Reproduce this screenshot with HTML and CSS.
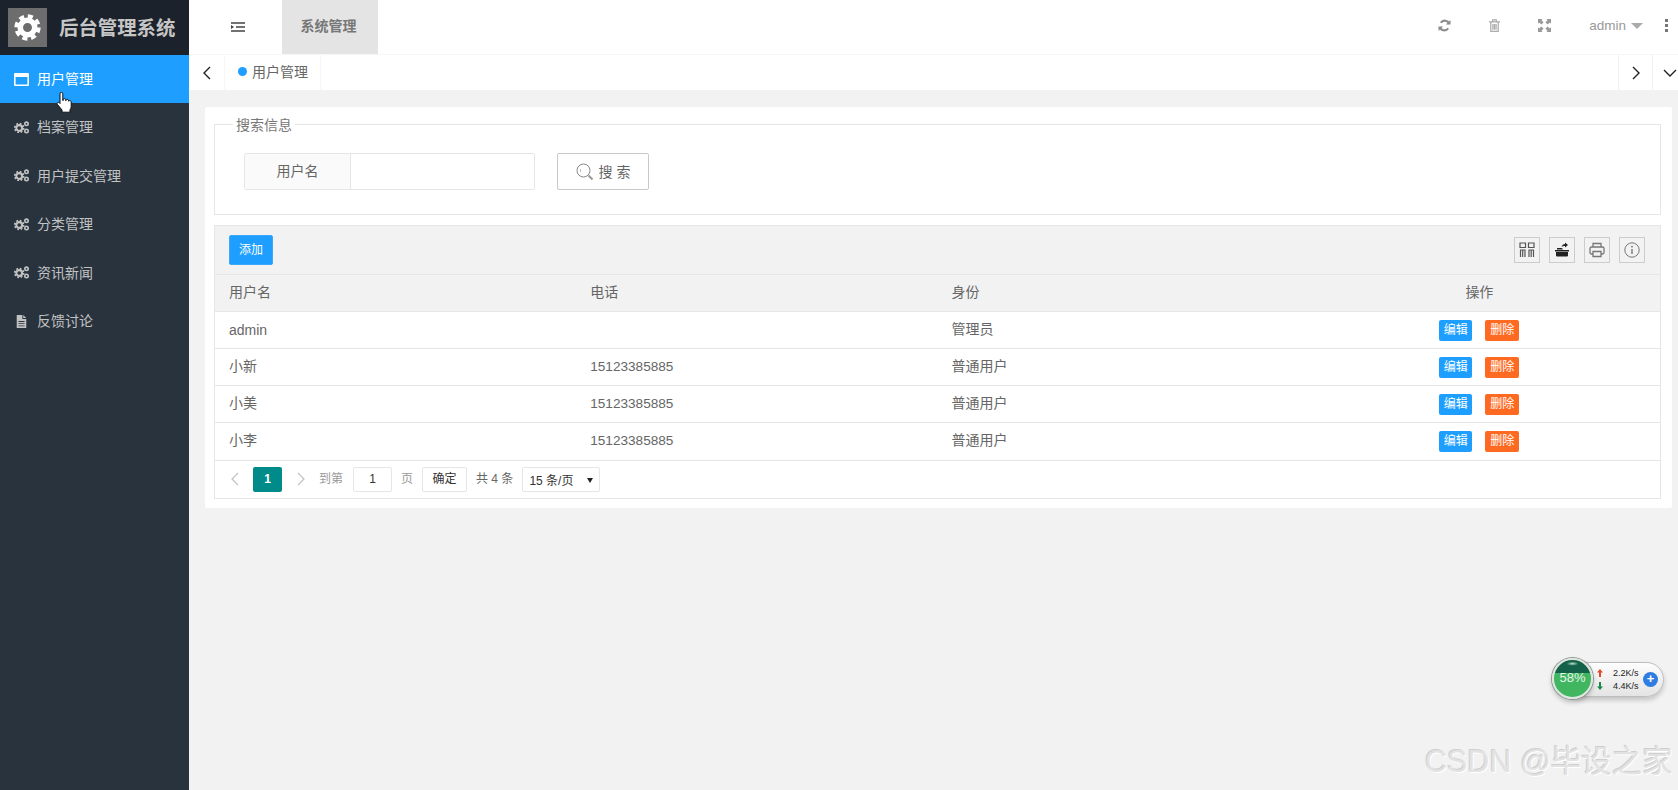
FILE: index.html
```html
<!DOCTYPE html>
<html lang="zh-CN">
<head>
<meta charset="utf-8">
<title>后台管理系统</title>
<link rel="stylesheet" href="styles.css">
</head>
<body>
<svg class="defs" width="0" height="0">
  <defs>
    <symbol id="cog" viewBox="0 0 24 24">
      <circle cx="12" cy="12" r="8.6" fill="none" stroke="currentColor" stroke-width="4.6" stroke-dasharray="3.9 2.85"/>
      <circle cx="12" cy="12" r="6" fill="none" stroke="currentColor" stroke-width="4.6"/>
    </symbol>
    <symbol id="cogs" viewBox="0 0 15 13">
      <circle cx="5.200" cy="7" r="4.400" fill="none" stroke="currentColor" stroke-width="1.800" stroke-dasharray="1.800 1.650"/>
      <circle cx="5.200" cy="7" r="2.900" fill="none" stroke="currentColor" stroke-width="2.100"/>
      <circle cx="12.500" cy="2.800" r="1.700" fill="none" stroke="currentColor" stroke-width="1.600"/>
      <circle cx="12.500" cy="10" r="1.700" fill="none" stroke="currentColor" stroke-width="1.600"/>
    </symbol>
  </defs>
</svg>
<div class="app">
  <aside class="side">
    <div class="logo">
      <span class="logo-box"><svg class="logo-cog"><use href="#cog"/></svg></span>
      <span class="logo-text">后台管理系统</span>
    </div>
    <nav class="menu">
      <a class="menu-item active">
        <svg class="menu-icon" viewBox="0 0 15 13"><path fill="currentColor" fill-rule="evenodd" d="M1 0h13a1 1 0 0 1 1 1v11a1 1 0 0 1-1 1H1a1 1 0 0 1-1-1V1a1 1 0 0 1 1-1zm.6 4v7.4h11.8V4z"/></svg>
        <span>用户管理</span>
      </a>
      <a class="menu-item"><svg class="menu-icon"><use href="#cogs"/></svg><span>档案管理</span></a>
      <a class="menu-item"><svg class="menu-icon"><use href="#cogs"/></svg><span>用户提交管理</span></a>
      <a class="menu-item"><svg class="menu-icon"><use href="#cogs"/></svg><span>分类管理</span></a>
      <a class="menu-item"><svg class="menu-icon"><use href="#cogs"/></svg><span>资讯新闻</span></a>
      <a class="menu-item"><svg class="menu-icon" viewBox="0 0 15 15"><path fill="currentColor" fill-rule="evenodd" d="M2 0h6.5v4.5H13V15H2zM9.500 0 13 3.500H9.500zM4 7v1h7V7zm0 2.500v1h7v-1zM4 12v1h7v-1z"/></svg><span>反馈讨论</span></a>
    </nav>
  </aside>
  <main class="main">
    <header class="top">
      <div class="toggle">
        <svg class="toggle-icon" viewBox="0 0 14 10"><path fill="none" stroke="#444" stroke-width="1.600" d="M0 1h14M5 5h9M0 9h14"/><path fill="#444" d="M0 3l3 2-3 2z"/></svg>
      </div>
      <div class="top-tab">系统管理</div>
      <div class="top-right">
        <span class="top-icon"><svg viewBox="0 0 14 14" class="ticon dark"><path fill="none" stroke="currentColor" stroke-width="2.200" d="M12 5.500A5 5 0 0 0 3 4M2 8.500A5 5 0 0 0 11 10"/><path fill="currentColor" d="M13.500 1v5h-5zM.5 13V8h5z"/></svg></span>
        <span class="top-icon"><svg viewBox="0 0 12 14" class="ticon"><path fill="none" stroke="currentColor" stroke-width="1.300" d="M2 3.500v9.800h8V3.500M0 3h12M4 3V1h4v2M4.300 5.500v6M6 5.500v6M7.700 5.500v6"/></svg></span>
        <span class="top-icon"><svg viewBox="0 0 14 14" class="ticon full"><path fill="currentColor" d="M0 0h5L3.700 1.300 6 3.600 3.600 6 1.300 3.700 0 5zM14 0v5l-1.300-1.300L10.400 6 8 3.600l2.300-2.300L9 0zM0 14V9l1.300 1.300L3.600 8 6 10.400l-2.300 2.300L5 14zM14 14H9l1.300-1.300L8 10.400 10.400 8l2.300 2.300L14 9z"/></svg></span>
        <span class="user">admin</span>
        <span class="caret"></span>
        <span class="dots"><i></i><i></i><i></i></span>
      </div>
    </header>
    <div class="tabbar">
      <div class="tb-btn left"><svg class="chev" viewBox="0 0 8 14"><path d="M7 1 1 7l6 6"/></svg></div>
      <div class="tb-tab"><i class="dot"></i>用户管理</div>
      <div class="tb-fill"></div>
      <div class="tb-btn right"><svg class="chev" viewBox="0 0 8 14"><path d="m1 1 6 6-6 6"/></svg></div>
      <div class="tb-btn last"><svg class="chev-down" viewBox="0 0 14 8"><path d="m1 1 6 6 6-6"/></svg></div>
    </div>
    <section class="content">
      <div class="card">
        <fieldset class="search">
          <legend class="search-title">搜索信息</legend>
          <div class="search-row">
            <div class="field">
              <label class="field-label" for="uname">用户名</label>
              <input class="field-input" id="uname" type="text">
            </div>
            <button class="search-btn" type="button">
              <svg class="search-icon" viewBox="0 0 18 18"><circle cx="7.500" cy="7.500" r="6.500" fill="none" stroke="#888" stroke-width="1"/><path d="m12.500 12.500 4 4" stroke="#999" stroke-width="2"/><path d="M4.500 6v3" stroke="#bbb"/></svg>
              <span>搜 索</span>
            </button>
          </div>
        </fieldset>
        <div class="grid">
          <div class="toolbar">
            <button class="add-btn" type="button">添加</button>
            <div class="tools">
              <span class="tool"><svg viewBox="0 0 16 16" class="tool-svg"><path fill="none" stroke="#555" stroke-width="1.200" d="M1 1h5.500v4.500H1zM9.500 1H15v4.500H9.500zM1 8h5.500M9.500 8H15M1.500 8v7M3.700 8v7M6 8v7M10 8v7M12.200 8v7M14.500 8v7"/></svg></span>
              <span class="tool"><svg viewBox="0 0 16 16" class="tool-svg"><path fill="#222" d="M1 8h14v1.500H1zM2 10h12v3.500a1 1 0 0 1-1 1H3a1 1 0 0 1-1-1zM3 6h5l1 1.500H3zM7.500 5c.5-2 2-3 3.500-3V.5L14 3l-3 2.500V4C9.500 4 8.500 4.300 7.500 5z"/></svg></span>
              <span class="tool"><svg viewBox="0 0 16 16" class="tool-svg"><path fill="none" stroke="#777" stroke-width="1.300" d="M4 5V1.500h8V5M4 12H2.500a1.500 1.500 0 0 1-1.500-1.500V6.500A1.500 1.500 0 0 1 2.500 5h11A1.500 1.500 0 0 1 15 6.500v4a1.500 1.500 0 0 1-1.500 1.500H12M4 9.500h8v5H4z"/></svg></span>
              <span class="tool"><svg viewBox="0 0 16 16" class="tool-svg"><circle cx="8" cy="8" r="7.200" fill="none" stroke="#777" stroke-width="1"/><path d="M8 7v5" stroke="#777" stroke-width="1.400"/><circle cx="8" cy="4.700" r=".9" fill="#777"/></svg></span>
            </div>
          </div>
          <table class="table">
            <thead>
              <tr class="head"><th class="c cn">用户名</th><th class="c cn">电话</th><th class="c cn">身份</th><th class="ops cn">操作</th></tr>
            </thead>
            <tbody>
              <tr><td class="c">admin</td><td class="c"></td><td class="c cn">管理员</td><td class="ops"><span class="mini blue">编辑</span><span class="mini orange">删除</span></td></tr>
              <tr><td class="c cn">小新</td><td class="c num">15123385885</td><td class="c cn">普通用户</td><td class="ops"><span class="mini blue">编辑</span><span class="mini orange">删除</span></td></tr>
              <tr><td class="c cn">小美</td><td class="c num">15123385885</td><td class="c cn">普通用户</td><td class="ops"><span class="mini blue">编辑</span><span class="mini orange">删除</span></td></tr>
              <tr><td class="c cn">小李</td><td class="c num">15123385885</td><td class="c cn">普通用户</td><td class="ops"><span class="mini blue">编辑</span><span class="mini orange">删除</span></td></tr>
            </tbody>
          </table>
          <div class="pager">
            <svg class="pg-chev" viewBox="0 0 8 14"><path d="M7 1 1 7l6 6"/></svg>
            <span class="pg-cur">1</span>
            <svg class="pg-chev next" viewBox="0 0 8 14"><path d="m1 1 6 6-6 6"/></svg>
            <span class="pg-muted to">到第</span>
            <input class="pg-input" type="text" value="1">
            <span class="pg-muted page">页</span>
            <button class="pg-ok" type="button">确定</button>
            <span class="pg-total">共 4 条</span>
            <div class="pg-select"><span>15 条/页</span><i class="pg-tri"></i></div>
          </div>
        </div>
      </div>
    </section>
  </main>
</div>
<svg class="hand" viewBox="0 0 16 21"><path fill="#fff" stroke="#111" stroke-width="1" d="M4 1.800a1.400 1.400 0 0 1 2.800 0V8.500h.4V7.600a1.300 1.300 0 0 1 2.500 0v1h.4v-.5a1.300 1.300 0 0 1 2.400 0v1h.4a1.300 1.300 0 0 1 2.300.5v4.800c0 1.600-.6 2.500-1.200 3.400v2.400H6v-2.200L1.300 12.300c-1-1.400.9-2.700 2-1.600L4 11.500z"/></svg>
<div class="monitor">
  <div class="mon-pill">
    <div class="mon-rates">
      <div class="mon-rate"><svg class="arrow" viewBox="0 0 6 8"><path fill="#e2492a" d="M3 0l3 3.500H4V8H2V3.500H0z"/></svg><span>2.2K/s</span></div>
      <div class="mon-rate"><svg class="arrow" viewBox="0 0 6 8"><path fill="#1a8a4c" d="M3 8 0 4.500h2V0h2v4.500h2z"/></svg><span>4.4K/s</span></div>
    </div>
    <span class="mon-plus">+</span>
  </div>
  <div class="mon-ball">58%</div>
</div>
<div class="watermark">CSDN @毕设之家</div>
</body>
</html>
```
FILE: styles.css
```css
* { box-sizing: border-box; }
html, body { margin: 0; height: 100%; overflow: hidden; }
body {
  font-family: "Liberation Sans", "Noto Sans CJK SC", sans-serif;
  font-size: 14px;
  line-height: 20px;
  color: #666;
  background: #f2f2f2;
  position: relative;
}
.defs { position: absolute; }
.app { display: flex; height: 790px; }

.side { width: 189px; flex: none; background: #28333e; color: #c2c2c2; }
.logo { height: 55px; background: #1c222b; display: flex; align-items: center; padding-left: 8px; }
.logo-box { width: 39px; height: 39px; background: #6d6d6d; display: flex; align-items: center; justify-content: center; margin-top: -1px; }
.logo-cog { width: 29px; height: 29px; color: #fff; }
.logo-text { margin-left: 12px; font-size: 19.400px; font-weight: 700; color: #c6c6c6; }
.menu { display: flex; flex-direction: column; }
.menu-item { height: 48.500px; display: flex; align-items: center; padding-left: 14px; }
.menu-item.active { background: #1e9fff; color: #fff; height: 48px; }
.menu-icon { width: 15px; height: 13px; margin-right: 8px; flex: none; }

.main { flex: 1; min-width: 0; display: flex; flex-direction: column; }
.top { height: 55px; background: #fff; display: flex; border-bottom: 1px solid #f6f6f6; }
.toggle { width: 93px; display: flex; align-items: center; justify-content: center; padding-left: 5px; }
.toggle-icon { width: 14px; height: 10px; }
.top-tab { width: 96px; background: #e4e4e4; display: flex; align-items: center; justify-content: center; font-weight: 700; font-size: 14px; color: #777; padding: 0 3px 2px 0; }
.top-right { margin-left: auto; display: flex; align-items: center; color: #aaa; padding-bottom: 3px; }
.top-icon { width: 50px; display: flex; justify-content: center; }
.ticon { width: 13px; height: 13px; }
.ticon.dark { color: #8c8c8c; }
.ticon.full { color: #999; }
.user { margin-left: 20px; font-size: 13.500px; color: #999; }
.caret { width: 0; height: 0; border: 6px solid transparent; border-top: 6px solid #aaa; border-bottom: 0; margin-left: 5px; }
.dots { display: flex; flex-direction: column; gap: 2px; margin: 0 10px 0 22px; }
.dots i { width: 3px; height: 3px; background: #777; display: block; }

.tabbar { height: 35px; background: #fff; display: flex; align-items: stretch; }
.tb-btn { display: flex; align-items: center; justify-content: center; }
.tb-btn.left { width: 36px; border-right: 1px solid #f6f6f6; }
.tb-btn.right { width: 34px; border-left: 1px solid #f0f0f0; }
.tb-btn.last { width: 26px; border-left: 1px solid #f0f0f0; justify-content: flex-end; padding-right: 1px; }
.chev { width: 8px; height: 14px; fill: none; stroke: #222; stroke-width: 1.400; }
.chev-down { width: 14px; height: 8px; fill: none; stroke: #222; stroke-width: 1.400; }
.tb-tab { width: 96px; display: flex; align-items: center; padding: 0 0 2px 13px; border-right: 1px solid #f6f6f6; }
.dot { width: 9px; height: 9px; border-radius: 50%; background: #1e9fff; margin-right: 5px; }
.tb-fill { flex: 1; }

.content { padding: 17px 6px 0 16px; }
.card { background: #fff; border-radius: 2px; padding: 7px 11px 10px 9px; height: 401px; }
.search { margin: 0; padding: 19px 0 24px; border: 1px solid #e6e6e6; min-width: 0; }
.search-title { margin-left: 18px; padding: 0 3px; font-size: 14px; line-height: 20px; color: #777; position: relative; top: 1px; }
.search-row { display: flex; padding-left: 29px; }
.field { display: flex; width: 291px; height: 37px; border: 1px solid #e6e6e6; border-radius: 2px; }
.field-label { width: 106px; background: #fafafa; border-right: 1px solid #e6e6e6; display: flex; align-items: center; justify-content: center; padding-bottom: 2px; }
.field-input { flex: 1; min-width: 0; border: 0; outline: 0; background: #fff; }
.search-btn { margin-left: 22px; width: 92px; height: 37px; background: #fff; border: 1px solid #c9c9c9; border-radius: 2px; display: flex; align-items: center; justify-content: center; gap: 5px; padding: 0; font: inherit; color: #666; }
.search-icon { width: 18px; height: 18px; }

.grid { margin-top: 10px; border: 1px solid #e6e6e6; }
.toolbar { height: 48px; background: #f2f2f2; display: flex; align-items: center; justify-content: space-between; padding: 0 15px 0 14px; }
.add-btn { width: 44px; height: 30px; border: 1px solid #3aa9fb; border-radius: 2px; background: #1e9fff; color: #fff; font: inherit; font-size: 12px; padding: 0; }
.tools { display: flex; gap: 9px; }
.tool { width: 26px; height: 26px; border: 1px solid #ccc; display: flex; align-items: center; justify-content: center; }
.tool-svg { width: 16px; height: 16px; }

.table { width: 100%; table-layout: fixed; border-collapse: collapse; font-size: 14px; }
.table th, .table td { height: 37px; padding: 0; border-top: 1px solid #e6e6e6; font-weight: 400; text-align: left; }
.head th { background: #f2f2f2; }
.table .c { width: 25%; padding-left: 14px; }
.table .cn { padding-bottom: 2px; }
.table .num { font-size: 13.600px; }
.table .ops { text-align: center; }
.mini { display: inline-block; height: 21px; line-height: 21px; width: 33px; border-radius: 2px; color: #fff; font-size: 12px; text-align: center; vertical-align: middle; }
.blue { background: #1e9fff; }
.orange { background: #ff6a22; width: 34px; margin-left: 13px; }

.pager { height: 38px; border-top: 1px solid #e6e6e6; display: flex; align-items: center; padding: 1px 0 1px 16px; font-size: 12px; }
.pg-chev { width: 8px; height: 14px; fill: none; stroke: #c2c2c2; stroke-width: 1.200; flex: none; }
.pg-cur { width: 29px; height: 25px; margin-left: 14px; background: #008b8b; color: #fff; border-radius: 2px; font-weight: 700; display: flex; align-items: center; justify-content: center; }
.pg-chev.next { margin-left: 15px; }
.pg-muted { color: #999; }
.to { margin-left: 14px; }
.pg-input { width: 39px; height: 25px; margin-left: 10px; border: 1px solid #e6e6e6; border-radius: 2px; text-align: center; font: inherit; color: #333; padding: 0; outline: 0; }
.page { margin-left: 9px; }
.pg-ok { width: 45px; height: 25px; margin-left: 9px; border: 1px solid #e6e6e6; border-radius: 2px; background: #fff; font: inherit; color: #333; padding: 0; }
.pg-total { margin-left: 9px; color: #666; }
.pg-select { width: 78px; height: 25px; margin-left: 9px; border: 1px solid #e6e6e6; border-radius: 2px; background: #fff; color: #333; padding: 3px 6px 0 6px; display: flex; align-items: center; justify-content: space-between; }
.pg-tri { width: 0; height: 0; border: 3.500px solid transparent; border-top: 5px solid #222; border-bottom: 0; }

.hand { position: absolute; left: 56px; top: 92px; width: 16px; height: 21px; }
.monitor { position: absolute; left: 1552px; top: 658px; width: 112px; height: 42px; }
.mon-pill { position: absolute; left: 12px; top: 4px; width: 100px; height: 35px; border-radius: 18px; border: 1px solid #bdbdbd; background: linear-gradient(#fdfdfd, #e4e4e4); box-shadow: 0 3px 5px rgba(0,0,0,.2); display: flex; align-items: center; padding: 0 5px 0 32px; justify-content: space-between; }
.mon-rates { display: flex; flex-direction: column; gap: 2px; }
.mon-rate { display: flex; align-items: center; font-size: 9px; line-height: 11px; color: #222; gap: 10px; }
.arrow { width: 6px; height: 8px; flex: none; }
.mon-plus { width: 15px; height: 15px; border-radius: 50%; background: #2f7de1; color: #fff; font-size: 13px; font-weight: 700; line-height: 14px; text-align: center; }
.mon-ball { position: absolute; left: 0; top: 0; width: 41px; height: 41px; border-radius: 50%; border: 2px solid #dfe6e0; box-shadow: 0 0 0 1px #8a9a90, 0 3px 5px rgba(0,0,0,.25); background: radial-gradient(ellipse 6px 2px at 50% 10%, #bfe3d0, transparent), linear-gradient(#14624a 0, #14624a 36%, #3fb65f 36%, #3fb65f 100%); color: #e7f5ea; font-size: 13px; display: flex; align-items: center; justify-content: center; padding-bottom: 2px; }
.watermark { position: absolute; left: 1425px; top: 742px; font-size: 30.500px; line-height: 38px; color: #e2e2e2; text-shadow: 1px 1px 0 #fff, -1px -1px 0 #cfcfcf; white-space: nowrap; }
```
